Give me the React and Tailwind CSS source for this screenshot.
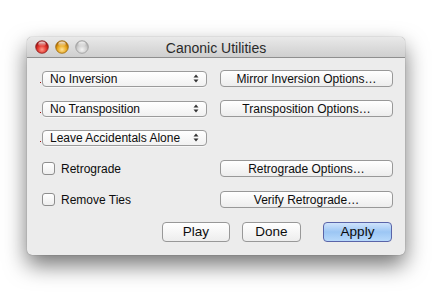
import React from "react";

const font = { fontFamily: '"Liberation Sans", Arial, sans-serif' };

function Light({ c1, c2, c3, stroke, id }) {
  return (
    <svg width="14" height="14" viewBox="0 0 14 14">
      <defs>
        <radialGradient id={id} cx="50%" cy="70%" r="60%">
          <stop offset="0%" stopColor={c1} />
          <stop offset="60%" stopColor={c2} />
          <stop offset="100%" stopColor={c3} />
        </radialGradient>
        <linearGradient id={id + "h"} x1="0" y1="0" x2="0" y2="1">
          <stop offset="0%" stopColor="#fff" stopOpacity="0.9" />
          <stop offset="100%" stopColor="#fff" stopOpacity="0" />
        </linearGradient>
      </defs>
      <circle cx="7" cy="7" r="6.3" fill={`url(#${id})`} stroke={stroke} strokeWidth="0.8" />
      <ellipse cx="7" cy="3.9" rx="3.8" ry="2.5" fill={`url(#${id}h)`} />
    </svg>
  );
}

function Arrows() {
  return (
    <svg width="6" height="9" viewBox="0 0 6 9">
      <path d="M3 0.5 L5.5 3.5 L0.5 3.5 Z" fill="#333" />
      <path d="M3 8.5 L5.5 5.5 L0.5 5.5 Z" fill="#333" />
    </svg>
  );
}

function Popup({ label }) {
  return (
    <div className="relative flex items-center">
      <span className="absolute left-[-2px] top-[11px] w-[1px] h-[1px] bg-[#a01010]" />
      <div className="w-[165px] h-[16px] rounded-[4px] border border-[#9b9b9b] bg-gradient-to-b from-[#ffffff] to-[#f1f1f1] shadow-[0_1px_0_rgba(255,255,255,0.6)] flex items-center pl-[7px] pr-[7px] text-[12px] text-[#0d0d0d]">
        <span className="flex-1 leading-none">{label}</span>
        <Arrows />
      </div>
    </div>
  );
}

function Btn({ label, w = "w-[173px]" }) {
  return (
    <div className={`${w} h-[17px] rounded-[4px] border border-[#989898] bg-gradient-to-b from-[#ffffff] to-[#ededed] flex items-center justify-center text-[12px] text-[#0d0d0d] leading-none`}>
      {label}
    </div>
  );
}

function Check({ label }) {
  return (
    <div className="flex items-center">
      <div className="w-[13px] h-[13px] rounded-[3px] border border-[#8e8e8e] bg-gradient-to-b from-[#ffffff] to-[#eeeeee]" />
      <span className="ml-[6px] text-[12px] text-[#0d0d0d] leading-none">{label}</span>
    </div>
  );
}

function BigBtn({ label, w, primary }) {
  const base = "h-[20px] rounded-[4px] border flex items-center justify-center text-[13.5px] leading-none";
  const cls = primary
    ? "border-[#5a64a8] bg-gradient-to-b from-[#cfe3fb] via-[#9cc6f4] to-[#b7d9fb] text-[#0a0a0a]"
    : "border-[#989898] bg-gradient-to-b from-[#ffffff] to-[#ededed] text-[#0d0d0d]";
  return <div className={`${w} ${base} ${cls}`}>{label}</div>;
}

export default function App() {
  return (
    <div className="w-[433px] h-[292px] bg-white overflow-hidden" style={font}>
      <div className="ml-[27px] mt-[37px] w-[378px] h-[218px] rounded-[5px] bg-[#ececec] shadow-[0_10px_22px_rgba(0,0,0,0.55),0_0_1px_rgba(0,0,0,0.5)] flex flex-col overflow-hidden">
        <div className="relative h-[21px] bg-gradient-to-b from-[#e9e9e9] to-[#cfcfcf] border-b border-[#8f8f8f] flex items-center justify-center rounded-t-[5px]">
          <div className="absolute left-[8px] top-[3px] flex gap-[6px]">
            <Light id="r" c1="#ff9a8a" c2="#e0332b" c3="#9e1111" stroke="#8a2020" />
            <Light id="y" c1="#ffe39a" c2="#e8a820" c3="#b06a00" stroke="#9a6a10" />
            <Light id="g" c1="#f4f4f4" c2="#d0d0d0" c3="#b0b0b0" stroke="#9a9a9a" />
          </div>
          <span className="text-[14px] text-[#2a2a2a] leading-none mt-[1px]">Canonic Utilities</span>
        </div>
        <div className="flex flex-col pl-[15px] pr-[12px] pt-[12px]">
          <div className="h-[17px] flex items-center justify-between">
            <Popup label="No Inversion" />
            <Btn label="Mirror Inversion Options…" />
          </div>
          <div className="h-[17px] mt-[13px] flex items-center justify-between">
            <Popup label="No Transposition" />
            <Btn label="Transposition Options…" />
          </div>
          <div className="h-[17px] mt-[12px] flex items-center justify-between">
            <Popup label="Leave Accidentals Alone" />
          </div>
          <div className="h-[17px] mt-[14px] flex items-center justify-between">
            <Check label="Retrograde" />
            <Btn label="Retrograde Options…" />
          </div>
          <div className="h-[17px] mt-[14px] flex items-center justify-between">
            <Check label="Remove Ties" />
            <Btn label="Verify Retrograde…" />
          </div>
          <div className="h-[20px] mt-[14px] flex items-center justify-end pr-[1px]">
            <BigBtn label="Play" w="w-[68px]" />
            <div className="ml-[12px]"><BigBtn label="Done" w="w-[59px]" /></div>
            <div className="ml-[22px]"><BigBtn label="Apply" w="w-[69px]" primary /></div>
          </div>
        </div>
      </div>
    </div>
  );
}
